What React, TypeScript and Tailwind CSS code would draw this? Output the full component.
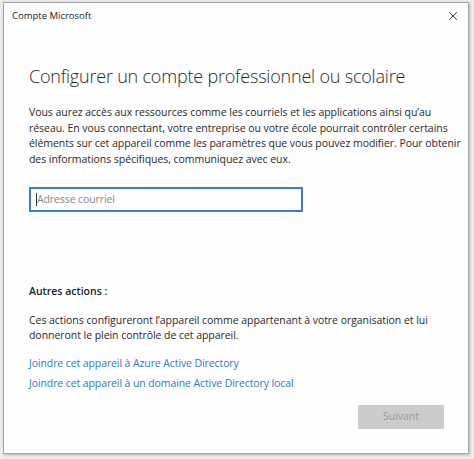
export default function App() {
  return (
    <div className="w-[474px] h-[459px] bg-[#eeeeee] pt-[2px] pl-[3px] overflow-hidden" style={{ fontFamily: '"Open Sans", "Noto Sans", sans-serif' }}>
      <div className="w-[466px] h-[452px] bg-[#fdfdfd] border border-[#a7a7a7] shadow-[1px_1px_3px_rgba(0,0,0,0.25)] flex flex-col">
        {/* title bar */}
        <div className="h-[26px] flex items-center justify-between pl-[8px] pr-[10px]">
          <span className="text-[9.5px] text-[#222]">Compte Microsoft</span>
          <svg width="10" height="10" viewBox="0 0 10 10" className="text-[#444]">
            <path d="M1 1 L9 9 M9 1 L1 9" stroke="currentColor" strokeWidth="1" />
          </svg>
        </div>

        <div className="flex flex-col pl-[25px] pr-[2px] text-[#222]">
          <h1 className="mt-[35px] text-[18px] font-light text-[#2b2b2b] leading-[24px] tracking-[-0.2px]">
            Configurer un compte professionnel ou scolaire
          </h1>
          <p className="mt-[17px] text-[10.5px] leading-[15.5px] text-[#2a2a2a] tracking-[-0.05px]">
            Vous aurez accès aux ressources comme les courriels et les applications ainsi qu’au réseau. En vous connectant, votre entreprise ou votre école pourrait contrôler certains éléments sur cet appareil comme les paramètres que vous pouvez modifier. Pour obtenir des informations spécifiques, communiquez avec eux.
          </p>

          <div className="mt-[20px] w-[274px] h-[25px] border-2 border-[#3a7fc6] flex items-center pl-[5px]">
            <span className="w-px h-[13px] bg-[#333]" />
            <span className="text-[10.5px] text-[#8a8a8a] tracking-[-0.1px]">Adresse courriel</span>
          </div>

          <div className="mt-[72px] text-[10.5px] font-semibold text-[#1f1f1f] leading-[15px]">Autres actions :</div>
          <p className="mt-[14px] pr-[20px] text-[10.5px] leading-[15px] text-[#2a2a2a] tracking-[-0.05px]">
            Ces actions configureront l’appareil comme appartenant à votre organisation et lui donneront le plein contrôle de cet appareil.
          </p>
          <div className="mt-[13px] flex flex-col gap-[5px] text-[10.5px] leading-[15px] text-[#2f7bc4] tracking-[-0.1px]">
            <span>Joindre cet appareil à Azure Active Directory</span>
            <span>Joindre cet appareil à un domaine Active Directory local</span>
          </div>

          <div className="mt-[14px] self-end mr-[22px] w-[86px] h-[24px] bg-[#cccccc] flex items-center justify-center text-[10.5px] text-[#9a9a9a]">
            Suivant
          </div>
        </div>
      </div>
    </div>
  );
}
